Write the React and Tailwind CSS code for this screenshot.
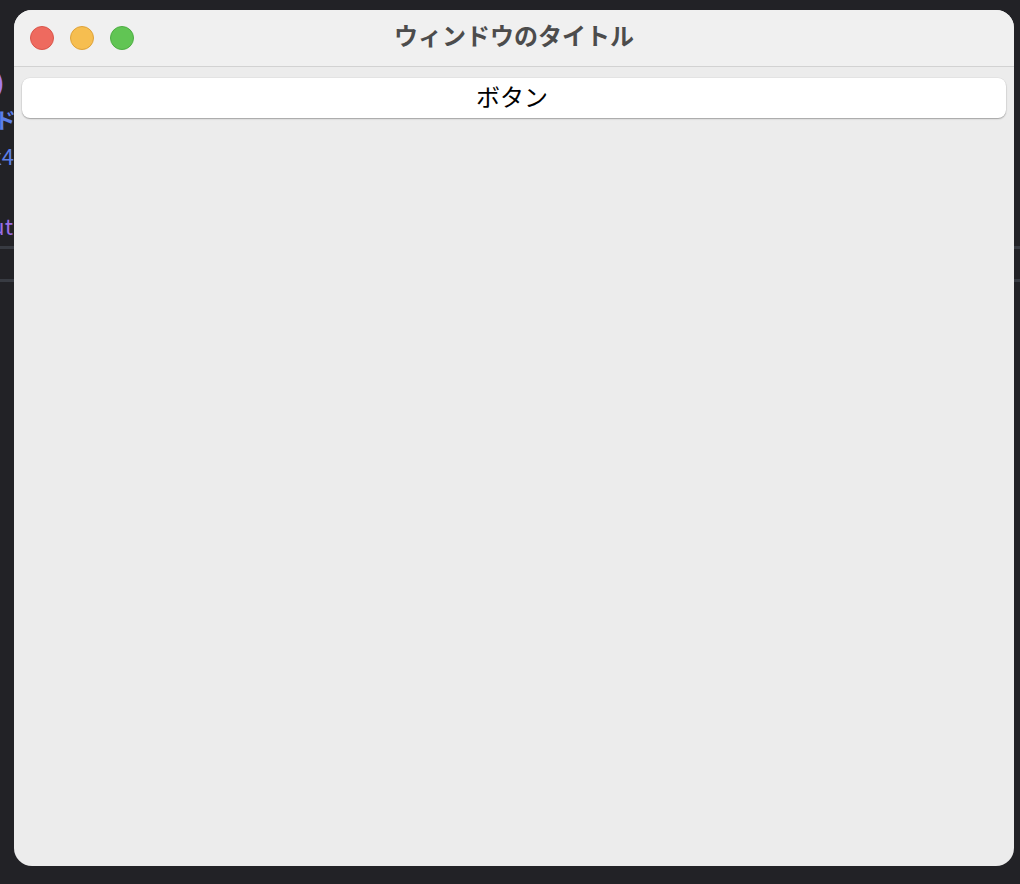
export default function App() {
  const jp = { fontFamily: '"Noto Sans CJK JP", "Noto Sans", sans-serif' };
  return (
    <div className="relative w-[1020px] h-[884px] overflow-hidden bg-[#222226]" style={jp}>
      {/* background content behind the window */}
      <div className="absolute left-0 top-0 w-[14px] h-[300px] overflow-hidden">
        <div className="absolute right-0 top-[67px] flex flex-col items-end gap-[9px] whitespace-nowrap text-[22px] leading-[28px]">
          <div className="mr-[10px] font-bold text-[#a57cf0]">(0)</div>
          <div className="-mr-[2px] font-bold text-[#5c7fe6]">コード</div>
          <div className="text-[#5c7fe6]">x4</div>
          <div className="mt-[33px] mr-[1px] text-[#9a6ee6]">Out</div>
        </div>
      </div>
      <div className="absolute left-0 right-0 top-[246px] h-[3px] bg-[#383b42]" />
      <div className="absolute left-0 right-0 top-[279px] h-[3px] bg-[#383b42]" />

      {/* window */}
      <div className="absolute left-[14px] top-[10px] w-[1000px] h-[856px] rounded-[18px] overflow-hidden flex flex-col bg-[#ececec]">
        <div className="relative h-[57px] shrink-0 bg-[#f0f0f0] border-b border-[#d2d2d2] flex items-center justify-center pb-[6px]">
          <div className="absolute left-[16px] top-[16px] flex gap-[16px]">
            <div className="w-[24px] h-[24px] rounded-full bg-[#ee6a5f] border border-[#d9564b]" />
            <div className="w-[24px] h-[24px] rounded-full bg-[#f6be50] border border-[#dea23a]" />
            <div className="w-[24px] h-[24px] rounded-full bg-[#61c554] border border-[#4ead44]" />
          </div>
          <div className="text-[24px] font-bold text-[#4c4c4c] leading-none">ウィンドウのタイトル</div>
        </div>
        <div className="flex-1 px-[8px] pt-[11px]">
          <div className="h-[40px] rounded-[8px] bg-white shadow-[0_1px_1.5px_rgba(0,0,0,0.3),0_0_0_0.5px_rgba(0,0,0,0.06)] flex items-center justify-center pb-[5px] pr-[4px] text-[24px] text-black leading-none">
            ボタン
          </div>
        </div>
      </div>
    </div>
  );
}
